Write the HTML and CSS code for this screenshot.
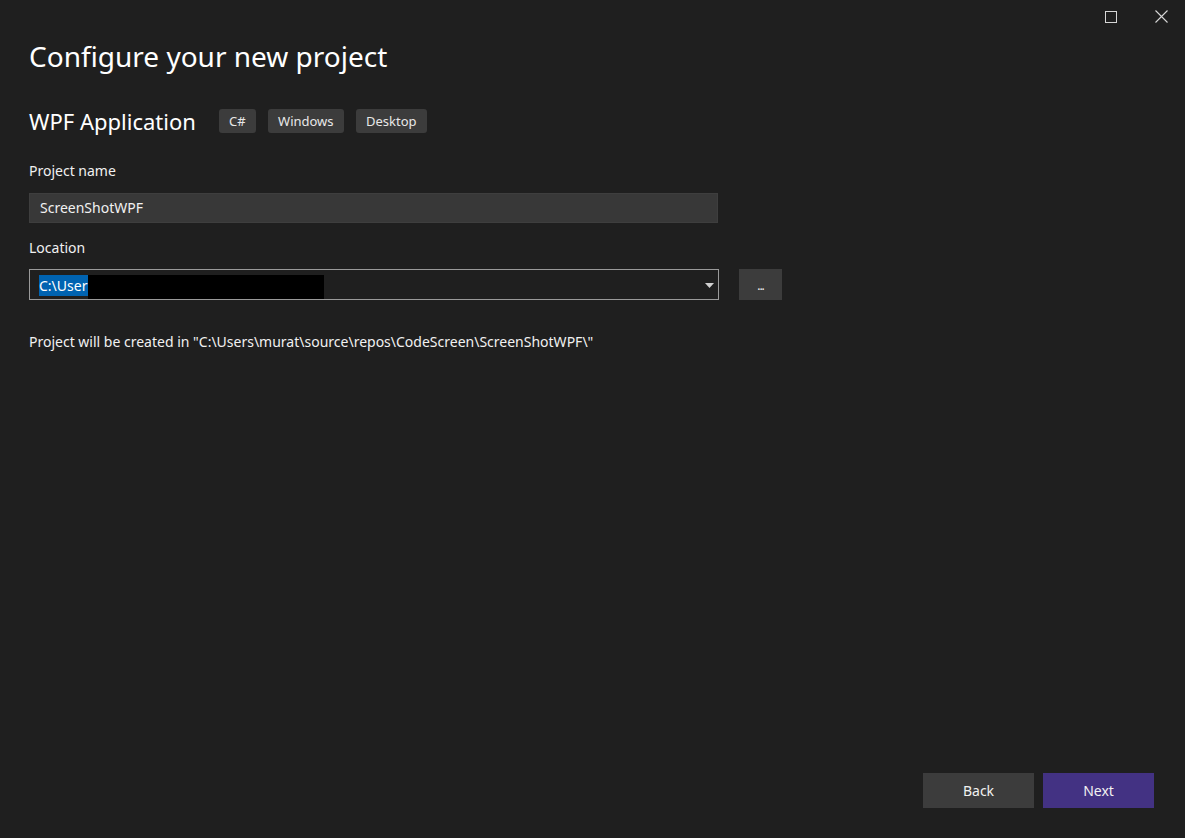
FILE: index.html
```html
<!DOCTYPE html>
<html>
<head>
<meta charset="utf-8">
<link rel="stylesheet" href="styles.css">
</head>
<body>
<div class="window">
  <div class="titlebar">
    <span class="tb-btn">
      <svg width="12" height="12" viewBox="0 0 12 12"><rect x="0.5" y="0.5" width="11" height="11" fill="none" stroke="#d6d6d6" stroke-width="1"/></svg>
    </span>
    <span class="tb-btn">
      <svg width="13" height="13" viewBox="0 0 13 13"><path d="M0.5 0.5 L12.5 12.5 M12.5 0.5 L0.5 12.5" stroke="#d6d6d6" stroke-width="1.1" fill="none"/></svg>
    </span>
  </div>
  <div class="content">
    <h1 class="title">Configure your new project</h1>
    <div class="template">
      <span class="template-name">WPF Application</span>
      <span class="tag tag-cs">C#</span>
      <span class="tag tag-win">Windows</span>
      <span class="tag tag-desk">Desktop</span>
    </div>
    <div class="label label-first">Project name</div>
    <div class="textbox">ScreenShotWPF</div>
    <div class="label">Location</div>
    <div class="location-row">
      <div class="combo">
        <span class="sel">C:\User</span><span class="redact"></span>
        <svg class="arrow" width="9" height="5" viewBox="0 0 9 5"><path d="M0 0 H9 L4.5 5 Z" fill="#d0d0d0"/></svg>
      </div>
      <div class="browse">...</div>
    </div>
    <div class="note">Project will be created in "C:\Users\murat\source\repos\CodeScreen\ScreenShotWPF\"</div>
  </div>
  <div class="footer">
    <div class="btn btn-back">Back</div>
    <div class="btn btn-next">Next</div>
  </div>
</div>
</body>
</html>
```

FILE: styles.css
```css
html, body {
  margin: 0;
  padding: 0;
  background: #1f1f1f;
  color: #f1f1f1;
  font-family: "Noto Sans", "Open Sans", sans-serif;
}
.window {
  width: 1185px;
  height: 838px;
  display: flex;
  flex-direction: column;
  box-sizing: border-box;
}
.titlebar {
  height: 34px;
  display: flex;
  justify-content: flex-end;
  align-items: flex-start;
  padding-right: 0;
}
.tb-btn {
  width: 50px;
  height: 34px;
  display: flex;
  align-items: center;
  justify-content: center;
  padding-bottom: 1px;
  padding-left: 2px;
  box-sizing: border-box;
}
.content {
  padding: 0 29px;
}
.title {
  margin: 2px 0 0 0;
  font-size: 28px;
  font-weight: 400;
  line-height: 40px;
  color: #ffffff;
}
.template {
  display: flex;
  align-items: center;
  margin-top: 31px;
  height: 28px;
}
.template-name {
  font-size: 22px;
  color: #ffffff;
  margin-right: 23px;
}
.tag {
  background: #3c3c3c;
  border-radius: 3px;
  font-size: 13px;
  color: #e8e8e8;
  height: 24px;
  line-height: 24px;
  text-align: center;
  margin-right: 12px;
}
.tag-cs { width: 37px; }
.tag-win { width: 76px; }
.tag-desk { width: 71px; }
.label {
  font-size: 14px;
  line-height: 20px;
  color: #f1f1f1;
  margin-top: 15px;
}
.label-first { margin-top: 26px; }
.textbox {
  margin-top: 12px;
  width: 689px;
  height: 30px;
  box-sizing: border-box;
  background: #383838;
  border: 1px solid #3e3e3e;
  padding: 0 10px;
  font-size: 14px;
  line-height: 28px;
  color: #f1f1f1;
}
.location-row {
  margin-top: 11px;
  display: flex;
  align-items: flex-start;
}
.combo {
  width: 690px;
  height: 31px;
  box-sizing: border-box;
  border: 1px solid #9a9a9a;
  display: flex;
  align-items: center;
  padding-left: 9px;
  position: relative;
}
.sel {
  background: #0063b1;
  color: #ffffff;
  font-size: 14px;
  line-height: 21px;
  height: 21px;
  width: 49px;
  overflow: hidden;
  white-space: nowrap;
  margin-top: 1px;
}
.redact {
  background: #000000;
  width: 236px;
  height: 24px;
  margin-top: 4px;
}
.arrow {
  position: absolute;
  right: 4px;
  top: 13px;
}
.browse {
  margin-left: 20px;
  width: 43px;
  height: 31px;
  background: #3c3c3c;
  color: #f1f1f1;
  font-size: 12px;
  line-height: 34px;
  text-align: center;
  letter-spacing: -1px;
}
.note {
  margin-top: 32px;
  font-size: 14px;
  line-height: 20px;
  color: #f1f1f1;
}
.footer {
  margin-top: auto;
  display: flex;
  justify-content: flex-end;
  gap: 9px;
  padding: 0 31px 30px 0;
}
.btn {
  width: 111px;
  height: 35px;
  line-height: 35px;
  text-align: center;
  font-size: 14px;
  color: #f1f1f1;
}
.btn-back { background: #3c3c3c; }
.btn-next { background: #433283; }
```
